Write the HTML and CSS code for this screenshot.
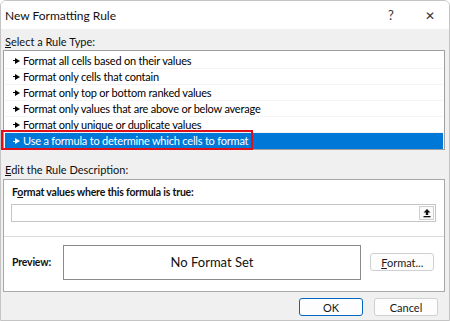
FILE: index.html
```html
<!DOCTYPE html>
<html lang="en">
<head>
  <meta charset="UTF-8">
  <meta name="viewport" content="width=device-width, initial-scale=1.0">
  <title>New Formatting Rule</title>
  <link rel="stylesheet" href="styles.css">
</head>
<body>
  <div class="window">
    <div class="titlebar">
      <span class="title">New Formatting Rule</span>
      <span class="help">?</span>
      <span class="close">&#x2715;</span>
    </div>

    <div class="content">
      <div class="group-label"><u>S</u>elect a Rule Type:</div>
      <div class="listbox">
        <div class="row"><span class="arrow"></span>Format all cells based on their values</div>
        <div class="row"><span class="arrow"></span>Format only cells that contain</div>
        <div class="row"><span class="arrow"></span>Format only top or bottom ranked values</div>
        <div class="row"><span class="arrow"></span>Format only values that are above or below average</div>
        <div class="row"><span class="arrow"></span>Format only unique or duplicate values</div>
        <div class="row selected"><span class="arrow"></span>Use a formula to determine which cells to format</div>
        <div class="highlight"></div>
      </div>

      <div class="group-label second"><u>E</u>dit the Rule Description:</div>
      <div class="desc">
        <div class="desc-top">
          <div class="bold-label">F<u>o</u>rmat values where this formula is true:</div>
          <div class="formula">
            <span class="collapse-btn">
              <svg width="10" height="10" viewBox="0 0 10 10">
                <path d="M5 1 L1.5 4.5 H3.8 V7 H6.2 V4.5 H8.5 Z" fill="#111"/>
                <rect x="1.5" y="8" width="7" height="1.3" fill="#111"/>
              </svg>
            </span>
          </div>
        </div>
        <div class="desc-bottom">
          <span class="bold-label preview-label">Preview:</span>
          <div class="preview">No Format Set</div>
          <button class="btn format-btn"><u>F</u>ormat...</button>
        </div>
      </div>

      <div class="footer">
        <button class="btn ok-btn">OK</button>
        <button class="btn">Cancel</button>
      </div>
    </div>
  </div>
</body>
</html>
```

FILE: styles.css
```css
body {
  margin: 0;
  font-family: Lato, "Noto Sans", sans-serif;
  font-size: 11px;
  color: #111;
  background: #ffffff;
}
.window {
  width: 450px;
  height: 321px;
  box-sizing: border-box;
  border: 1px solid #c4c4c4;
  border-radius: 6px 6px 0 0;
  display: flex;
  flex-direction: column;
  overflow: hidden;
}
.titlebar {
  height: 28px;
  flex: none;
  background: #ffffff;
  display: flex;
  align-items: center;
  padding-left: 4px;
  font-size: 12px;
}
.title {
  flex: 1;
}
.help {
  width: 14px;
  margin-right: 23px;
  font-size: 13px;
  color: #333;
}
.close {
  width: 14px;
  margin-right: 10px;
  font-size: 12px;
  color: #333;
}
.content {
  flex: 1;
  background: #f0f0f0;
  padding: 0 4px 0 2px;
}
.group-label {
  height: 16px;
  line-height: 16px;
  margin-top: 5px;
  padding-left: 2px;
}
.group-label.second {
  margin-top: 12px;
}
.listbox {
  position: relative;
  height: 100px;
  box-sizing: border-box;
  border: 1px solid #a0a0a0;
  background: #ffffff;
  padding: 2px 1px 0 1px;
}
.row {
  height: 16px;
  line-height: 16px;
  display: flex;
  align-items: center;
  border-bottom: 1px solid #f4f4f4;
  box-sizing: border-box;
  padding-left: 8px;
  white-space: nowrap;
  letter-spacing: -0.2px;
  color: #000;
}
.row.selected {
  background: #0078d7;
  color: #ffffff;
  border-bottom: none;
}
.arrow {
  width: 7px;
  height: 6px;
  margin-right: 3px;
  background:
    linear-gradient(currentColor, currentColor) 0 2.5px / 3px 1px no-repeat;
  position: relative;
}
.arrow::after {
  content: "";
  position: absolute;
  left: 2px;
  top: 0;
  border-left: 5px solid currentColor;
  border-top: 3px solid transparent;
  border-bottom: 3px solid transparent;
}
.highlight {
  position: absolute;
  left: -3px;
  top: 79px;
  width: 252px;
  height: 20px;
  box-sizing: border-box;
  border: 2px solid #e0101a;
}
.desc {
  height: 113px;
  margin-top: 1px;
  box-sizing: border-box;
  border: 1px solid #a8a8a8;
  background: #ffffff;
  display: flex;
  flex-direction: column;
}
.desc-top {
  padding: 4px 8px 14px 7px;
  border-bottom: 1px solid #dcdcdc;
}
.bold-label {
  font-weight: bold;
  font-size: 10.5px;
  letter-spacing: -0.2px;
  height: 16px;
  line-height: 16px;
  padding-left: 1px;
}
.formula {
  margin-top: 4px;
  height: 18px;
  box-sizing: border-box;
  border: 1px solid #c4c4c4;
  display: flex;
  justify-content: flex-end;
  align-items: center;
  padding-right: 1px;
}
.collapse-btn {
  width: 15px;
  height: 14px;
  box-sizing: border-box;
  border: 1px solid #cfcfcf;
  background: #fafafa;
  display: flex;
  align-items: center;
  justify-content: center;
}
.desc-bottom {
  flex: 1;
  display: flex;
  align-items: center;
  padding: 0 10px 4px 7px;
}
.preview-label {
  width: 51px;
}
.preview {
  width: 301px;
  height: 35px;
  box-sizing: border-box;
  border: 1px solid #8a8a8a;
  display: flex;
  align-items: center;
  justify-content: center;
  font-size: 13px;
}
.btn {
  font-family: inherit;
  font-size: 11px;
  color: #1a1a1a;
  height: 18px;
  box-sizing: border-box;
  border: 1px solid #d0d0d0;
  border-radius: 3px;
  background: #fdfdfd;
  padding: 0;
}
.format-btn {
  width: 64px;
  margin-left: 9px;
}
.footer {
  display: flex;
  justify-content: flex-end;
  gap: 11px;
  margin-top: 6px;
  padding-right: 7px;
}
.footer .btn {
  width: 64px;
}
.ok-btn {
  border: 1.5px solid #0067c0;
}
```
